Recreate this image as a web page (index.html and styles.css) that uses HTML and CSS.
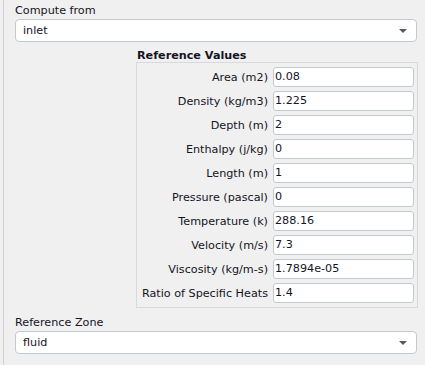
FILE: index.html
```html
<!DOCTYPE html>
<html lang="en">
<head>
  <meta charset="UTF-8">
  <title>Reference Values</title>
  <link rel="stylesheet" href="styles.css">
</head>
<body>
  <div class="panel">
    <div class="field-label">Compute from</div>
    <div class="select">
      <span>inlet</span>
      <span class="caret"></span>
    </div>

    <div class="group-title">Reference Values</div>
    <div class="group">
      <div class="row"><label>Area (m2)</label><div class="entry">0.08</div></div>
      <div class="row"><label>Density (kg/m3)</label><div class="entry">1.225</div></div>
      <div class="row"><label>Depth (m)</label><div class="entry">2</div></div>
      <div class="row"><label>Enthalpy (j/kg)</label><div class="entry">0</div></div>
      <div class="row"><label>Length (m)</label><div class="entry">1</div></div>
      <div class="row"><label>Pressure (pascal)</label><div class="entry">0</div></div>
      <div class="row"><label>Temperature (k)</label><div class="entry">288.16</div></div>
      <div class="row"><label>Velocity (m/s)</label><div class="entry">7.3</div></div>
      <div class="row"><label>Viscosity (kg/m-s)</label><div class="entry">1.7894e-05</div></div>
      <div class="row"><label>Ratio of Specific Heats</label><div class="entry">1.4</div></div>
    </div>

    <div class="field-label zone">Reference Zone</div>
    <div class="select">
      <span>fluid</span>
      <span class="caret"></span>
    </div>
  </div>
</body>
</html>
```

FILE: styles.css
```css
* {
  box-sizing: border-box;
}

body {
  margin: 0;
  background: #f0f0f0;
  font-family: "DejaVu Sans", sans-serif;
  font-size: 11.2px;
  color: #141424;
}

.panel {
  margin-left: 3px;
  border-left: 1px solid #d2d2d2;
  height: 365px;
  padding: 3px 8px 0 11px;
}

.field-label {
  height: 16px;
  line-height: 15px;
}

.zone {
  margin-top: 7px;
}

.select {
  width: 402px;
  height: 23px;
  background: #fff;
  border: 1px solid #c3c9d3;
  border-radius: 4px;
  padding: 0 8px 0 7px;
  display: flex;
  align-items: center;
  justify-content: space-between;
}

.caret {
  width: 0;
  height: 0;
  border-left: 4px solid transparent;
  border-right: 4px solid transparent;
  border-top: 4px solid #555a60;
  margin-right: 1px;
}

.group-title {
  margin: 5px 0 0 121px;
  height: 15px;
  line-height: 18px;
  font-weight: bold;
  padding-left: 1px;
}

.group {
  margin-left: 121px;
  width: 282px;
  border: 1px solid #d6d9de;
  padding: 4px 3px 4px 2px;
  display: flex;
  flex-direction: column;
  gap: 4px;
}

.row {
  display: flex;
  justify-content: flex-end;
  align-items: center;
  gap: 5px;
  height: 20px;
}

.row label {
  white-space: nowrap;
  flex-shrink: 0;
}

.entry {
  width: 141px;
  flex-shrink: 0;
  height: 20px;
  background: #fff;
  border: 1px solid #c3c9d3;
  border-radius: 3px;
  padding-left: 1px;
  line-height: 18px;
}
```
